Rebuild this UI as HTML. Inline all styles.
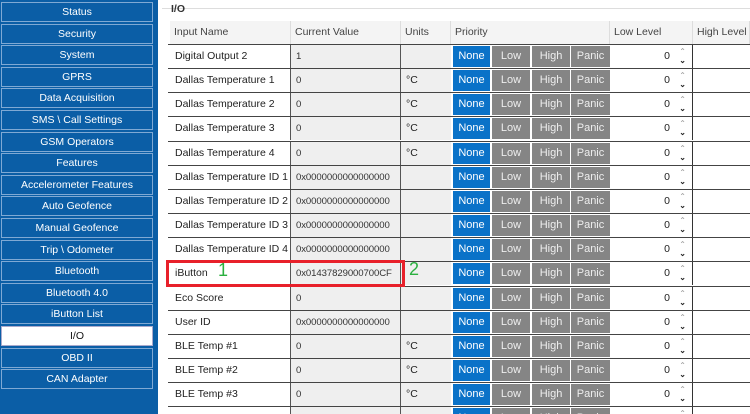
<!DOCTYPE html><html><head><style>
*{margin:0;padding:0;box-sizing:border-box}
html,body{width:750px;height:414px;overflow:hidden}
body{background:#fff;font-family:"Liberation Sans",sans-serif;font-size:10.5px;color:#222;position:relative}
#side{position:absolute;left:0;top:0;width:158px;height:414px;background:#0b5ea6}
.b{position:absolute;left:1px;width:152px;height:20px;border:1px solid #7fa9d4;background:#0b5ea6;color:#fff;text-align:center;line-height:18px;font-size:10.5px}
.b.sel{background:#fff;color:#111;border-color:#aac}
#io{position:absolute;left:171px;top:3px;font-size:10.5px;font-weight:bold;color:#333}
.line{position:absolute;left:162px;top:8px;width:588px;height:1px;background:#ddd}
.hdr{position:absolute;top:21px;height:23px;background:#f4f4f4;color:#444;line-height:23px;padding-left:4px;border-right:1px solid #ddd}
.row{position:absolute;left:168px;width:582px;height:24px;border-top:1px solid #444}
.c{position:absolute;top:0;height:23px;line-height:23px;padding-left:5px;white-space:nowrap;overflow:hidden}
.n{left:2px;width:121px;background:#fff;border-right:1px solid #555}
.v{left:123px;width:110px;background:#efefef;border-right:1px solid #555;color:#333;font-size:9.6px;letter-spacing:-0.1px}
.u{left:233px;width:50px;background:#efefef}
.p{position:absolute;top:1px;height:21px;line-height:21px;color:#eee;text-align:center;background:#858585;font-size:11px}
.ll{left:442px;width:83px;background:#fff;text-align:right;padding-right:22px;border-right:1px solid #333;overflow:visible}
.sp{position:absolute;right:6px;top:2px;font-size:8px;line-height:9px;color:#999}
.hl{left:525px;width:57px;background:#fff}
</style></head><body>
<div id="side">
<div class="b" style="top:2px">Status</div>
<div class="b" style="top:23.6px">Security</div>
<div class="b" style="top:45.2px">System</div>
<div class="b" style="top:66.8px">GPRS</div>
<div class="b" style="top:88.4px">Data Acquisition</div>
<div class="b" style="top:110px">SMS \ Call Settings</div>
<div class="b" style="top:131.6px">GSM Operators</div>
<div class="b" style="top:153.2px">Features</div>
<div class="b" style="top:174.8px">Accelerometer Features</div>
<div class="b" style="top:196.4px">Auto Geofence</div>
<div class="b" style="top:218px">Manual Geofence</div>
<div class="b" style="top:239.6px">Trip \ Odometer</div>
<div class="b" style="top:261.2px">Bluetooth</div>
<div class="b" style="top:282.8px">Bluetooth 4.0</div>
<div class="b" style="top:304.4px">iButton List</div>
<div class="b sel" style="top:326px">I/O</div>
<div class="b" style="top:347.6px">OBD II</div>
<div class="b" style="top:369.2px">CAN Adapter</div>
</div>
<div class="line"></div>
<div id="io">I/O</div>
<div class="hdr" style="left:170px;width:121px">Input Name</div>
<div class="hdr" style="left:291px;width:110px">Current Value</div>
<div class="hdr" style="left:401px;width:50px">Units</div>
<div class="hdr" style="left:451px;width:159px">Priority</div>
<div class="hdr" style="left:610px;width:83px">Low Level</div>
<div class="hdr" style="left:693px;width:57px">High Level</div>
<div id="rows"></div>
<div style="position:absolute;left:166px;top:260px;width:239px;height:27px;border:3px solid #e8202a"></div>
<div style="position:absolute;left:218px;top:260px;color:#2bb040;font-size:18px">1</div>
<div style="position:absolute;left:409px;top:259px;color:#2bb040;font-size:18px">2</div>
<script>
var d=[["Digital Output 2","1",""],["Dallas Temperature 1","0","°C"],["Dallas Temperature 2","0","°C"],["Dallas Temperature 3","0","°C"],["Dallas Temperature 4","0","°C"],["Dallas Temperature ID 1","0x0000000000000000",""],["Dallas Temperature ID 2","0x0000000000000000",""],["Dallas Temperature ID 3","0x0000000000000000",""],["Dallas Temperature ID 4","0x0000000000000000",""],["iButton","0x01437829000700CF",""],["Eco Score","0",""],["User ID","0x0000000000000000",""],["BLE Temp #1","0","°C"],["BLE Temp #2","0","°C"],["BLE Temp #3","0","°C"],["","",""]];
var h="";
d.forEach(function(r,i){var t=44+i*24.15;
h+='<div class="row" style="top:'+t+'px"><div class="c n">'+r[0]+'</div><div class="c v">'+r[1]+'</div><div class="c u">'+r[2]+'</div>'+
'<div class="p" style="left:285px;width:37px;background:#0a72c8;color:#fff">None</div><div class="p" style="left:324px;width:38px">Low</div><div class="p" style="left:364px;width:38px">High</div><div class="p" style="left:403px;width:39px">Panic</div>'+
'<div class="c ll">0<span class="sp">&#8963;<br><b style="color:#222">&#8964;</b></span></div><div class="c hl"></div></div>';});
document.getElementById("rows").innerHTML=h;
</script>
</body></html>
